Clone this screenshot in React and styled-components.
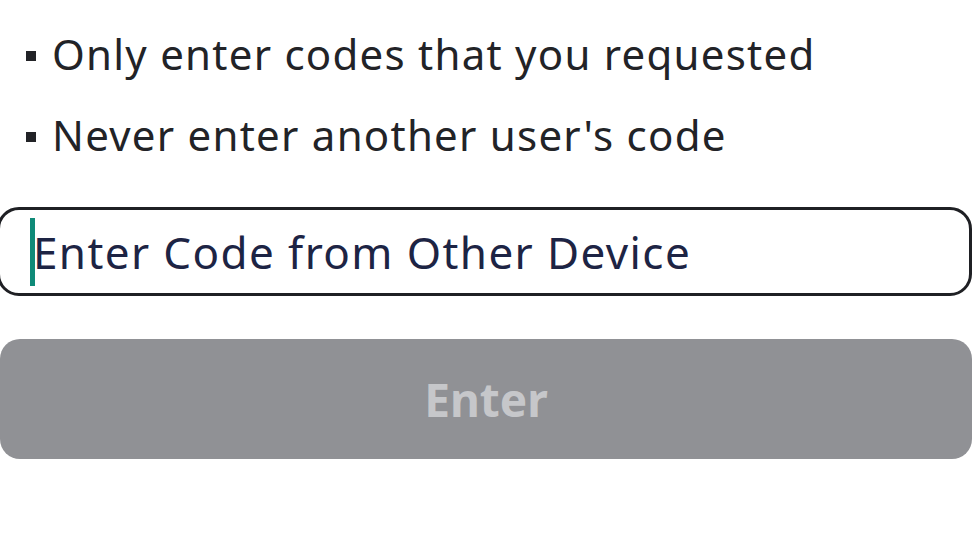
import React from "react";
import styled, { createGlobalStyle } from "styled-components";

const Global = createGlobalStyle`
  html, body { margin: 0; padding: 0; background: #ffffff; overflow: hidden; }
  body { font-family: "Noto Sans", "Open Sans", sans-serif; }
`;

const Page = styled.div`
  width: 972px;
  height: 546px;
  display: flex;
  flex-direction: column;
  padding-top: 26px;
  box-sizing: border-box;
`;

const List = styled.ul`
  list-style: none;
  margin: 0;
  padding: 0 0 0 26px;
  display: flex;
  flex-direction: column;
  gap: 26px;
`;

const Item = styled.li`
  display: flex;
  align-items: center;
  gap: 16px;
  font-size: 42px;
  line-height: 55px;
  letter-spacing: 1.25px;
  color: #222327;
`;

const Bullet = styled.span`
  width: 10px;
  height: 10px;
  background: #222327;
  flex: none;
  margin-top: 4px;
`;

const Field = styled.div`
  margin: 45px 0 0 -3px;
  width: 975px;
  height: 89px;
  box-sizing: border-box;
  border: 3px solid #1f2024;
  border-radius: 22px;
  display: flex;
  align-items: center;
  padding-left: 30px;
`;

const Caret = styled.span`
  width: 5px;
  height: 68px;
  background: #0f8a78;
  flex: none;
`;

const FieldText = styled.span`
  font-size: 44px;
  letter-spacing: 1.4px;
  color: #1d2444;
  margin-left: -2px;
`;

const Button = styled.button`
  margin-top: 43px;
  width: 972px;
  height: 120px;
  border: none;
  border-radius: 20px;
  background: #909195;
  color: #c6c7ca;
  font-family: "Noto Sans", "Open Sans", sans-serif;
  font-weight: 700;
  font-size: 46px;
  display: flex;
  align-items: center;
  justify-content: center;
  padding: 0;
`;

export default function App() {
  return (
    <>
      <Global />
      <Page>
        <List>
          <Item>
            <Bullet />
            Only enter codes that you requested
          </Item>
          <Item>
            <Bullet />
            Never enter another user's code
          </Item>
        </List>
        <Field>
          <Caret />
          <FieldText>Enter Code from Other Device</FieldText>
        </Field>
        <Button>Enter</Button>
      </Page>
    </>
  );
}
